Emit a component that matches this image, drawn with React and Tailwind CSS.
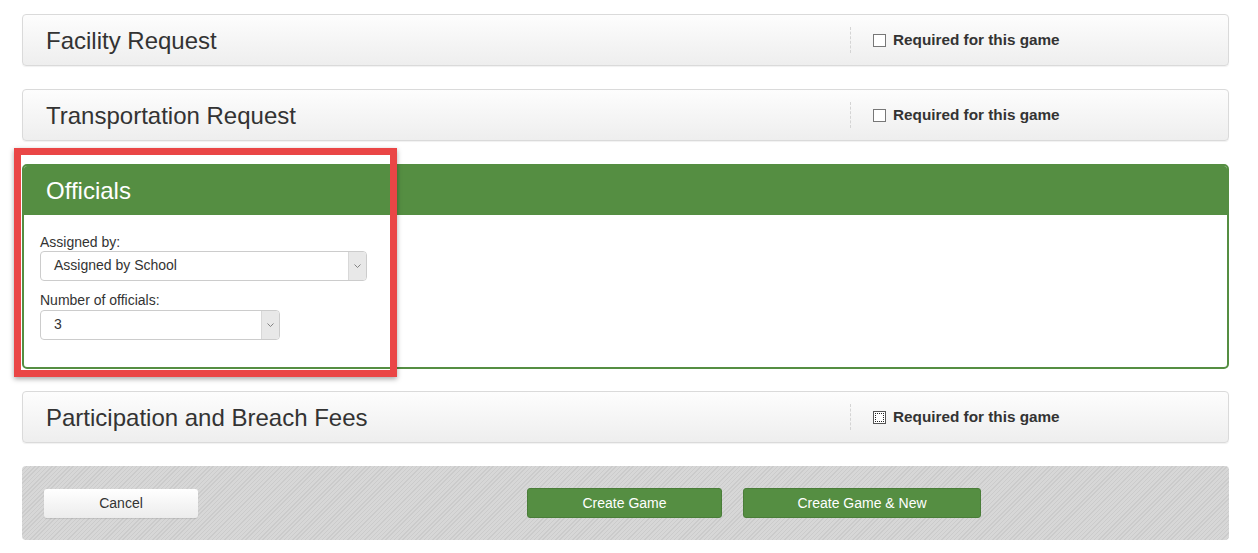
import React from 'react';

const font = { fontFamily: '"Liberation Sans", Arial, sans-serif' };

function RequiredBox({ focused }) {
  return (
    <div className="flex h-[26px] w-[378px] items-center border-l border-dashed border-[#d4d4d4] pl-[22px]">
      <span
        className={`inline-block h-[13px] w-[13px] border bg-white ${
          focused ? 'border-[#555] outline-1 outline-dotted outline-offset-[-3px] outline-[#222]' : 'border-[#777]'
        }`}
      />
      <span className="ml-[7px] text-[15.3px] font-bold text-[#333]">Required for this game</span>
    </div>
  );
}

function CollapsedPanel({ title, focused }) {
  return (
    <div className="flex h-[52px] items-center justify-between rounded-[4px] border border-[#dadada] bg-gradient-to-b from-[#fdfdfd] to-[#eeeeee] pl-[23px] shadow-[0_1px_1px_rgba(0,0,0,0.06)]">
      <h3 className="pt-[2px] text-[24px] leading-none text-[#333]">{title}</h3>
      <RequiredBox focused={focused} />
    </div>
  );
}

function Select({ value, width }) {
  return (
    <div className={`flex h-[30px] ${width} rounded-[4px] border border-[#cccccc] bg-white`}>
      <div className="flex flex-1 items-center pb-[1px] pl-[13px] text-[14px] text-[#333]">{value}</div>
      <div className="flex w-[18px] items-center justify-center rounded-r-[3px] border-l border-[#d8d8d8] bg-[#e8e8e8]">
        <svg width="7" height="4" viewBox="0 0 7 4" fill="none">
          <path d="M0.5 0.5 L3.5 3.5 L6.5 0.5" stroke="#777" strokeWidth="0.9" />
        </svg>
      </div>
    </div>
  );
}

export default function App() {
  return (
    <div className="relative min-h-[553px] bg-white pl-[22px] pr-[29px] pt-[14px]" style={font}>
      {/* Facility / Transportation */}
      <CollapsedPanel title="Facility Request" />
      <div className="mt-[23px]">
        <CollapsedPanel title="Transportation Request" />
      </div>

      {/* Officials (expanded) */}
      <div className="mt-[23px] h-[205px] overflow-hidden rounded-[5px] border-2 border-[#558e42] bg-white">
        <div className="flex h-[49px] items-center bg-[#558e42] pl-[22px]">
          <h3 className="pt-[1px] text-[24px] leading-none text-white">Officials</h3>
        </div>
        <div className="pl-[16px] pt-[19px]">
          <label className="block text-[14px] leading-[16px] text-[#333]">Assigned by:</label>
          <div className="mt-[1px]">
            <Select value="Assigned by School" width="w-[327px]" />
          </div>
          <label className="mt-[11px] block text-[14px] leading-[16px] text-[#333]">Number of officials:</label>
          <div className="mt-[2px]">
            <Select value="3" width="w-[240px]" />
          </div>
        </div>
      </div>

      {/* Participation */}
      <div className="mt-[22px]">
        <CollapsedPanel title="Participation and Breach Fees" focused />
      </div>

      {/* Footer actions */}
      <div className="mt-[23px] flex h-[74px] items-center rounded-[4px] bg-[repeating-linear-gradient(135deg,#cbcbcb_0px,#cbcbcb_1px,#d7d7d7_1px,#d7d7d7_3px)] pl-[22px]">
        <button className="h-[29px] w-[154px] rounded-[3px] bg-gradient-to-b from-white to-[#ececec] text-[14px] text-[#333] shadow-[0_1px_1px_rgba(0,0,0,0.1)]">
          Cancel
        </button>
        <button className="ml-[329px] h-[30px] w-[195px] rounded-[3px] border border-[#4a7d39] bg-[#558e42] text-[14px] text-white">
          Create Game
        </button>
        <button className="ml-[21px] h-[30px] w-[238px] rounded-[3px] border border-[#4a7d39] bg-[#558e42] text-[14px] text-white">
          Create Game &amp; New
        </button>
      </div>

      {/* Annotation highlight */}
      <div className="pointer-events-none absolute left-[14px] top-[148px] h-[229px] w-[383px] border-[7px] border-[#ea4646] shadow-[0_2px_5px_rgba(0,0,0,0.35)]" />
    </div>
  );
}
